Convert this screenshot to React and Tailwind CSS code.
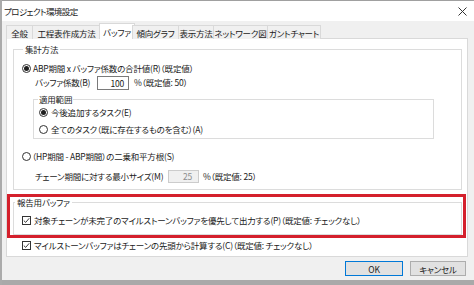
import React from 'react';

const Radio = ({ checked }) => (
  <span className="w-[9px] h-[9px] rounded-full border border-[#333333] bg-white flex items-center justify-center shrink-0">
    {checked && <span className="w-[5px] h-[5px] rounded-full bg-[#1f1f1f]" />}
  </span>
);

const Check = () => (
  <span className="w-[9px] h-[9px] border border-[#333333] bg-white flex items-center justify-center shrink-0">
    <svg width="7" height="7" viewBox="0 0 7 7">
      <path d="M0.8 3.6 L2.7 5.4 L6.2 1.3" fill="none" stroke="#222" strokeWidth="0.9" />
    </svg>
  </span>
);

const tabs = [
  { label: '全般', w: 'w-[27px]' },
  { label: '工程表作成方法', w: 'w-[69px]' },
  { label: 'バッファ', w: 'w-[36px]', active: true },
  { label: '傾向グラフ', w: 'w-[47px]' },
  { label: '表示方法', w: 'w-[36px]' },
  { label: 'ネットワーク図', w: 'w-[55px]' },
  { label: 'ガントチャート', w: 'w-[54px]' },
];

export default function App() {
  return (
    <div className="w-[474px] h-[285px] flex flex-col bg-[#f0f0f0] border-l-2 border-[#ababab] overflow-hidden whitespace-nowrap text-[8.5px] tracking-[-0.2px] text-[#1a1a1a] font-['Noto_Sans_CJK_JP',sans-serif] [font-feature-settings:'palt']">
      {/* title bar */}
      <div className="h-[21px] shrink-0 bg-white border-t border-[#a0a0a0] flex items-center justify-between pl-[2px] pr-[7px]">
        <span className="leading-[12px] tracking-[-0.6px]">プロジェクト環境設定</span>
        <svg width="9" height="9" viewBox="0 0 9 9">
          <path d="M0.5 0.5 L8.5 8.5 M8.5 0.5 L0.5 8.5" stroke="#333" strokeWidth="1" />
        </svg>
      </div>

      <div className="pl-[4px] pr-[6px] pt-[2px]">
        {/* tabs */}
        <div className="flex items-end h-[16px] relative z-10 -mb-px">
          {tabs.map((t) =>
            t.active ? (
              <div
                key={t.label}
                className={`${t.w} h-[16px] -mx-[2px] bg-white border border-b-0 border-[#d9d9d9] flex items-center justify-center leading-[12px]`}
              >
                {t.label}
              </div>
            ) : (
              <div
                key={t.label}
                className={`${t.w} h-[14px] bg-[#f0f0f0] border border-b-0 border-[#d9d9d9] -ml-px first:ml-0 flex items-center justify-center leading-[12px]`}
              >
                {t.label}
              </div>
            )
          )}
        </div>

        {/* panel */}
        <div className="h-[219px] bg-white border border-[#d9d9d9] flex flex-col">
          <fieldset className="mt-[4px] ml-[6px] mr-[5px] border border-[#dcdcdc]">
            <legend className="ml-[9px] px-[2px] leading-[12px]">集計方法</legend>
            <div className="pl-[8px] pt-[7px] pb-[4px]">
              <div className="h-[12px] flex items-center gap-[2px]">
                <Radio checked />
                <span>ABP期間 x バッファ係数の合計値(R)（既定値）</span>
              </div>
              <div className="h-[17px] flex items-center pl-[13px]">
                <span className="w-[62px] shrink-0">バッファ係数(B)</span>
                <span className="w-[32px] h-[14px] border border-[#7a7a7a] bg-white text-right pr-[4px] leading-[12px]">100</span>
                <span className="ml-[5px]">%（既定値: 50）</span>
              </div>

              <fieldset className="mt-[3px] ml-[11px] mr-[27px] border border-[#dcdcdc]">
                <legend className="ml-[4px] px-[1px] leading-[10px]">適用範囲</legend>
                <div className="pl-[5px] pb-[1px]">
                  <div className="h-[17px] flex items-center gap-[3px]">
                    <Radio checked />
                    <span>今後追加するタスク(E)</span>
                  </div>
                  <div className="h-[16px] flex items-center gap-[3px]">
                    <Radio />
                    <span>全てのタスク（既に存在するものを含む）(A)</span>
                  </div>
                </div>
              </fieldset>

              <div className="mt-[9px] h-[17px] flex items-center gap-[1px]">
                <Radio />
                <span>（HP期間 - ABP期間）の二乗和平方根(S)</span>
              </div>
              <div className="mt-[3px] h-[17px] flex items-center pl-[13px]">
                <span className="w-[133px] shrink-0">チェーン期間に対する最小サイズ(M)</span>
                <span className="w-[31px] h-[13px] border border-[#cccccc] bg-[#f0f0f0] text-[#8d8d8d] text-right pr-[6px] leading-[11px]">25</span>
                <span className="ml-[4px]">%（既定値: 25）</span>
              </div>
            </div>
          </fieldset>

          {/* highlighted group */}
          <div className="mt-[4px] mr-[1px] border-[3px] border-[#d4202c]">
            <fieldset className="ml-[3px] mr-[1px] border border-[#dcdcdc]">
              <legend className="ml-[1px] px-[2px] leading-[10px]">報告用バッファ</legend>
              <div className="pl-[8px] pt-[5px] pb-[5px]">
                <div className="h-[17px] flex items-center gap-[3px]">
                  <Check />
                  <span>対象チェーンが未完了のマイルストーンバッファを優先して出力する(P)（既定値: チェックなし）</span>
                </div>
              </div>
            </fieldset>
          </div>

          <div className="h-[14px] pl-[15px] flex items-center gap-[3px]">
            <Check />
            <span>マイルストーンバッファはチェーンの先頭から計算する(C)（既定値: チェックなし）</span>
          </div>
        </div>

        {/* buttons */}
        <div className="mt-[4px] flex justify-end gap-[7px] pr-[2px]">
          <button className="w-[58px] h-[15px] border border-[#0078d7] bg-[#e1e1e1] leading-[12px]">OK</button>
          <button className="w-[56px] h-[15px] border border-[#adadad] bg-[#e1e1e1] leading-[12px]">キャンセル</button>
        </div>
      </div>

      <div className="mt-auto h-[5px] bg-[#a9a9a9]" />
    </div>
  );
}
